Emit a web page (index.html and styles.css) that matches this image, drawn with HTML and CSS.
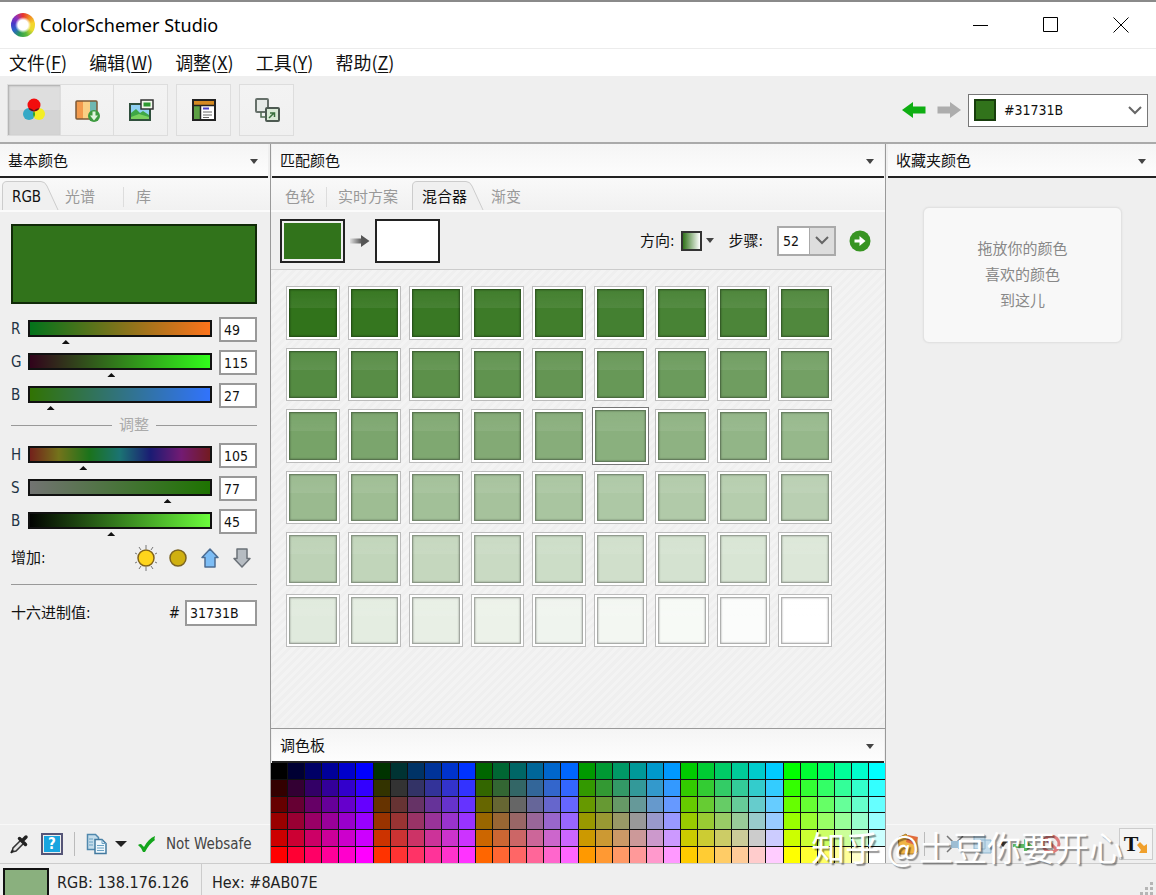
FILE: index.html
```html
<!DOCTYPE html>
<html lang="zh-CN">
<head>
    <meta charset="UTF-8">
    <title>ColorSchemer Studio</title>
    <link rel="stylesheet" href="styles.css">
</head>
<body>
    <header class="titlebar">
        <span class="logo"></span>
        <h1>ColorSchemer Studio</h1>
        <button class="win-btn" aria-label="最小化"><svg width="16" height="16"><path d="M0 8.500h15"/></svg></button>
        <button class="win-btn" aria-label="最大化"><svg width="16" height="16"><path d="M.5 .5h14v14h-14z"/></svg></button>
        <button class="win-btn" aria-label="关闭"><svg width="16" height="16"><path d="M.5 .5l15 15M15.500 .5l-15 15"/></svg></button>
    </header>
    <nav class="menubar">
        <a href="#">文件(<u>F</u>)</a>
        <a href="#">编辑(<u>W</u>)</a>
        <a href="#">调整(<u>X</u>)</a>
        <a href="#">工具(<u>Y</u>)</a>
        <a href="#">帮助(<u>Z</u>)</a>
    </nav>
    <div class="toolbar">
        <div class="group">
            <button class="selected" aria-label="基本颜色">
                <svg width="26" height="26" viewBox="0 0 26 26">
                    <circle cx="8" cy="17" r="6" fill="#35a9c6"/>
                    <circle cx="18" cy="17" r="6" fill="#f3ee25"/>
                    <path d="M13 13.700a6 6 0 0 1 0 6.600a6 6 0 0 1 0-6.600z" fill="#2fa52f"/>
                    <circle cx="13" cy="8" r="6.500" fill="#f30d0d"/>
                    <path d="M7.500 11.200a6 6 0 0 1 5.500 2.600a6 6 0 0 1 5.500-2.600a6.500 6.500 0 0 1-11 0z" fill="#5a1420"/>
                </svg>
            </button>
            <button aria-label="图库">
                <svg width="26" height="26" viewBox="0 0 26 26">
                    <path d="M2 4h7v18H2z" fill="#f39b4d"/>
                    <path d="M9 4h7v18H9z" fill="#fad084"/>
                    <path d="M16 4h7v18h-7z" fill="#6fb7b2"/>
                    <rect x="2" y="4" width="21" height="18" rx="1" fill="none" stroke="#7c5a37" stroke-width="1.500"/>
                    <circle cx="20" cy="19" r="6" fill="#3c9a3f"/>
                    <path d="M18.500 14.500h3v4h2.500l-4 5-4-5h2.500z" fill="#dff3dc"/>
                </svg>
            </button>
            <button aria-label="图片方案">
                <svg width="26" height="26" viewBox="0 0 26 26">
                    <rect x="2" y="7" width="20" height="16" fill="#8fd0f2" stroke="#2f4f3c" stroke-width="2"/>
                    <path d="M3 16l5-4 4 4 3-2 6 4v4H3z" fill="#3fa747"/>
                    <path d="M3 20l8-3 10 3v2H3z" fill="#7ad05e"/>
                    <rect x="13" y="3" width="12" height="9" fill="#f4f8ee" stroke="#333" stroke-width="1.500"/>
                    <path d="M15.500 5.500h7v4h-7z" fill="#2e9a31"/>
                </svg>
            </button>
        </div>
        <div class="group">
            <button aria-label="网页预览">
                <svg width="26" height="26" viewBox="0 0 26 26">
                    <rect x="2" y="3" width="22" height="20" fill="#fff" stroke="#222" stroke-width="2"/>
                    <path d="M3 4h20v4H3z" fill="#d58a22"/>
                    <path d="M3 9h7v13H3z" fill="#5da044"/>
                    <path d="M3 8.500h20M9.500 9v13" stroke="#222" stroke-width="1.500"/>
                    <path d="M12 11.500h6" stroke="#4b3ec4" stroke-width="2"/>
                    <path d="M12 15h9M12 18h9M12 20.500h6" stroke="#666"/>
                </svg>
            </button>
        </div>
        <div class="group">
            <button aria-label="浮动窗口">
                <svg width="26" height="26" viewBox="0 0 26 26">
                    <rect x="2" y="2" width="12" height="13" rx="1" fill="#e6eae7" stroke="#66706a" stroke-width="2"/>
                    <rect x="12" y="11" width="13" height="13" rx="1" fill="#d9ead6" stroke="#4d5a52" stroke-width="2"/>
                    <path d="M7 15v5h5" fill="none" stroke="#4d6b50" stroke-width="1.500"/>
                    <path d="M15 21l5-5M16 16h4.500v4" fill="none" stroke="#38703c" stroke-width="1.500"/>
                </svg>
            </button>
        </div>
        <div class="history">
            <button aria-label="后退"><svg width="24" height="18" viewBox="0 0 24 18"><path d="M0 9l11-8v4.500h12.500v7H11V17z" fill="#0eae12"/></svg></button>
            <button aria-label="前进"><svg width="24" height="18" viewBox="0 0 24 18"><path d="M24 9L13 1v4.500H.5v7H13V17z" fill="#adadad"/></svg></button>
            <div class="combo">
                <span class="chip"></span>
                <select aria-label="当前颜色"><option>#31731B</option></select>
                <svg class="chevron" width="14" height="9"><path d="M1 1l6 6 6-6"/></svg>
            </div>
        </div>
    </div>

    <main class="panels">
        <section class="panel basic">
            <h2>基本颜色<i class="caret"></i></h2>
            <div class="tabs">
                <button class="tab active tab-rgb"><svg width="57" height="29"><path d="M.5 29V5q0-4.500 4.500-4.500h34q4 0 6 4.500l11 24"/></svg><span>RGB</span></button>
                <button class="tab tab-spectrum">光谱</button>
                <button class="tab tab-library">库</button>
            </div>
            <div class="basic-body">
                <div class="current"></div>
                <div class="channels">
                    <div class="channel"><label for="r">R</label><input class="slide-r" type="range" max="255" value="49" aria-label="R"><input id="r" type="text" value="49"></div>
                    <div class="channel"><label for="g">G</label><input class="slide-g" type="range" max="255" value="115" aria-label="G"><input id="g" type="text" value="115"></div>
                    <div class="channel"><label for="b">B</label><input class="slide-b" type="range" max="255" value="27" aria-label="B"><input id="b" type="text" value="27"></div>
                </div>
                <div class="divider"><span>调整</span></div>
                <div class="channels">
                    <div class="channel"><label for="h">H</label><input class="slide-h" type="range" max="360" value="105" aria-label="H"><input id="h" type="text" value="105"></div>
                    <div class="channel"><label for="s">S</label><input class="slide-s" type="range" max="100" value="77" aria-label="S"><input id="s" type="text" value="77"></div>
                    <div class="channel"><label for="v">B</label><input class="slide-v" type="range" max="100" value="45" aria-label="B"><input id="v" type="text" value="45"></div>
                </div>
                <div class="increase">
                    <span>增加:</span>
                    <button aria-label="变亮">
                        <svg width="24" height="26" viewBox="0 0 24 26">
                            <path d="M12 0v4M12 22v4M5 2l2 3M19 2l-2 3M5 24l2-3M19 24l-2-3M1 8l2 1M23 8l-2 1M1 18l2-1M23 18l-2-1" stroke="#777"/>
                            <circle cx="12" cy="13" r="8" fill="#ffd51c" stroke="#80621a" stroke-width="1.500"/>
                        </svg>
                    </button>
                    <button aria-label="变暗"><svg width="24" height="26" viewBox="0 0 24 26"><circle cx="12" cy="13" r="8" fill="#d0b010" stroke="#7c6420" stroke-width="1.500"/></svg></button>
                    <button aria-label="增加饱和度"><svg width="24" height="26" viewBox="0 0 24 26"><path d="M12 4l8 8.500h-3V22H7v-9.500H4z" fill="#7dbdf5" stroke="#4c6c92" stroke-width="1.500" stroke-linejoin="round"/></svg></button>
                    <button aria-label="降低饱和度"><svg width="24" height="26" viewBox="0 0 24 26"><path d="M12 22l8-8.500h-3V4H7v9.500H4z" fill="#b6bcc2" stroke="#6b7178" stroke-width="1.500" stroke-linejoin="round"/></svg></button>
                </div>
                <div class="hex">
                    <label for="hex">十六进制值:</label>
                    <span>#</span>
                    <input id="hex" type="text" value="31731B">
                </div>
            </div>
            <div class="footer basic-footer">
                <button aria-label="取色器">
                    <svg width="20" height="20" viewBox="0 0 20 20">
                        <path d="M2 18l1-4 8-8 3 3-8 8z" fill="#e4e4e4" stroke="#333" stroke-width="1.500"/>
                        <path d="M9.500 4.500l6 6M12 7l4-4" stroke="#222" stroke-width="3.500" stroke-linecap="round"/>
                        <path d="M1 19l2-3" stroke="#222" stroke-width="2"/>
                    </svg>
                </button>
                <button class="help" aria-label="帮助">?</button>
                <span class="sep"></span>
                <button class="copy" aria-label="复制">
                    <svg width="22" height="22" viewBox="0 0 22 22">
                        <path d="M1.500 1.500h8l3 3v12h-11z" fill="#c4ddeb" stroke="#5088ad" stroke-width="1.500"/>
                        <path d="M9 6.500h7l4 4v10H9z" fill="#eef7fc" stroke="#42799f" stroke-width="1.500"/>
                        <path d="M16 6.500v4h4M11 12.500h7M11 15h7M11 17.500h7M3 6h4M3 9h4M3 12h4" fill="none" stroke="#6aa2c4"/>
                    </svg>
                    <i class="caret big"></i>
                </button>
                <svg width="20" height="18" viewBox="0 0 20 18"><path d="M1 10q3-2 4 0l2 2Q11 4 18 1q-1 3 0 4-6 4-10 12H6Q4 12 1 10z" fill="#13a51c"/></svg>
                <span class="websafe">Not Websafe</span>
            </div>
        </section>

        <section class="panel match">
            <h2>匹配颜色<i class="caret"></i></h2>
            <div class="tabs">
                <button class="tab tab-wheel">色轮</button>
                <button class="tab tab-live">实时方案</button>
                <button class="tab active tab-mixer"><svg width="72" height="29"><path d="M.5 29V5q0-4.500 4.500-4.500h49q4 0 6 4.500l11 24"/></svg><span>混合器</span></button>
                <button class="tab tab-gradient">渐变</button>
            </div>
            <div class="mixbar">
                <button class="mix from" aria-label="起始颜色"></button>
                <svg width="20" height="14" viewBox="0 0 20 14">
                    <defs><linearGradient id="fade"><stop offset="0" stop-color="#555" stop-opacity=".1"/><stop offset=".6" stop-color="#555"/></linearGradient></defs>
                    <path d="M0 4.500h11V1l8.500 6-8.500 6V9.500H0z" fill="url(#fade)"/>
                </svg>
                <button class="mix to" aria-label="结束颜色"></button>
                <span class="direction-label">方向:</span>
                <button class="direction" aria-label="方向"><span></span><i class="caret"></i></button>
                <label for="steps">步骤:</label>
                <div class="steps">
                    <select id="steps"><option>52</option></select>
                    <span><svg class="chevron" width="14" height="9"><path d="M1 1l6 6 6-6"/></svg></span>
                </div>
                <button class="go" aria-label="生成"><svg width="22" height="22" viewBox="0 0 22 22"><circle cx="11" cy="11" r="10.500" fill="#379422"/><path d="M5.500 9.500h5V6l6 5-6 5v-3.500h-5z" fill="#fff"/></svg></button>
            </div>
            <div class="swatch-area"><div class="swatches" id="swatches"></div></div>
            <h2 class="palette-title">调色板<i class="caret"></i></h2>
            <div class="palette" id="palette"></div>
        </section>

        <section class="panel favorites">
            <h2>收藏夹颜色<i class="caret"></i></h2>
            <p class="drop">拖放你的颜色<br>喜欢的颜色<br>到这儿</p>
            <div class="footer fav-footer">
                <button aria-label="打开"><svg width="24" height="24" viewBox="0 0 24 24"><path d="M2 6l8-4 3 4h8v14l-4 2H4z" fill="#f0b544" stroke="#a9782c"/><path d="M12 3l10 2-3 8-9-3z" fill="#e16b3c"/></svg></button>
                <span class="sep"></span>
                <button class="arrange" aria-label="排列"><svg width="24" height="24" viewBox="0 0 24 24"><path d="M4 4l6 6M20 4l-6 6M4 20l6-6M20 20l-6-6" stroke="#777" stroke-width="1.500"/><path d="M8 9h8v7H8z" fill="#9dbdd3"/></svg></button>
                <button aria-label="复制颜色"><svg width="24" height="24" viewBox="0 0 24 24"><path d="M3 3h11v14H3zM9 8h11v13H9z" fill="#c5ddec" stroke="#8fb6cf"/></svg></button>
                <button aria-label="菜单"><i class="caret"></i></button>
                <button aria-label="添加"><svg width="24" height="24" viewBox="0 0 24 24"><path d="M2 12h11V7l9 7-9 7v-5H2z" fill="#5cb862"/></svg></button>
                <button aria-label="删除"><svg width="24" height="24" viewBox="0 0 24 24"><circle cx="12" cy="12" r="8" fill="none" stroke="#dd7c7c" stroke-width="3"/><path d="M7 7l10 10" stroke="#dd7c7c" stroke-width="3"/></svg></button>
                <button class="text-btn" aria-label="文字"><b>T</b><svg width="12" height="12" viewBox="0 0 12 12"><path d="M1 3l3-3 4 4 3-2v9H3l2-3z" fill="#f0a02c"/></svg></button>
            </div>
        </section>
    </main>

    <footer class="statusbar">
        <span class="status-chip"></span>
        <span class="status-rgb">RGB: 138.176.126</span>
        <span class="status-hex">Hex: #8AB07E</span>
        <svg class="grip" width="14" height="14"><path d="M10 1h3v3h-3zM5 6h3v3H5zM10 6h3v3h-3zM0 11h3v3H0zM5 11h3v3H5zM10 11h3v3h-3z"/></svg>
    </footer>
    <div class="watermark">知乎 @土豆你要开心</div>

    <script>
        var oSwatches = document.getElementById('swatches');
        var oPalette = document.getElementById('palette');
        var from = [49, 115, 27];
        var to = [255, 255, 255];
        var steps = 52;
        var last = steps + 1;

        // both end colours plus the steps between them
        for(var i=0; i<=last; i++){
            var rgb = [];
            for(var j=0; j<3; j++){
                rgb.push(Math.round(from[j] + (to[j] - from[j]) * i / last));
            }
            var oBtn = document.createElement('button');
            oBtn.className = i == 23 ? 'swatch selected' : 'swatch';
            oBtn.setAttribute('aria-label', 'rgb ' + rgb.join('.'));
            var oColor = document.createElement('span');
            oColor.style.backgroundColor = 'rgb(' + rgb.join(',') + ')';
            oBtn.appendChild(oColor);
            oSwatches.appendChild(oBtn);
        }

        // websafe colours: red by row, green by block, blue inside a block
        for(var r=0; r<6; r++){
            for(var c=0; c<36; c++){
                var oCell = document.createElement('span');
                oCell.style.backgroundColor = 'rgb(' + [r * 51, Math.floor(c / 6) * 51, c % 6 * 51].join(',') + ')';
                oPalette.appendChild(oCell);
            }
        }
    </script>
</body>
</html>
```
FILE: styles.css
```css
*{
    margin: 0;
    padding: 0;
    box-sizing: border-box;
}
body{
    display: flex;
    flex-direction: column;
    height: 100vh;
    overflow: hidden;
    background: #efefef;
    color: #111;
    font: 15px/20px "DejaVu Sans Condensed", "Noto Sans CJK SC", sans-serif;
}
button, input, select{
    font: inherit;
    color: inherit;
    border: 0;
    background: none;
    border-radius: 0;
}
button{
    display: flex;
    align-items: center;
    flex: none;
}
svg{
    flex: none;
    display: block;
}
select{
    appearance: none;
    outline: 0;
}
a{
    color: inherit;
    text-decoration: none;
}

/* title and menu */
.titlebar{
    display: flex;
    align-items: center;
    flex: none;
    height: 49px;
    padding-left: 11px;
    border-top: 2px solid #8a8a8a;
    border-bottom: 1px solid #ececec;
    background: #fff;
}
.titlebar h1{
    flex: 1;
    padding-left: 5px;
    font: 18px/24px "Noto Sans", sans-serif;
    color: #000;
}
.logo{
    width: 24px;
    height: 24px;
    border-radius: 50%;
    background: radial-gradient(#fff 0 5px, transparent 8px), conic-gradient(#e8342c, #f08a24, #f6d52c, #e8dc30, #5cb83c, #2a9c54, #2b62c8, #4a36c8, #9430b8, #e8342c);
}
.win-btn{
    justify-content: center;
    width: 70px;
    height: 46px;
}
.win-btn path{
    fill: none;
    stroke: #000;
}
.menubar{
    display: flex;
    flex: none;
    gap: 22px;
    height: 27px;
    padding-left: 9px;
    background: #fff;
    font: 18px/27px "Noto Sans CJK SC", sans-serif;
}
.menubar u{
    text-underline-offset: 2px;
}

/* toolbar */
.toolbar{
    display: flex;
    align-items: center;
    flex: none;
    gap: 8px;
    height: 68px;
    padding: 2px 8px 0 7px;
    border-bottom: 2px solid #aaa;
}
.group{
    display: flex;
    border: 1px solid #ddd;
    background: linear-gradient(#f3f3f3, #f0f0f0);
}
.group button{
    justify-content: center;
    width: 53px;
    height: 50px;
    border-right: 1px solid #ddd;
}
.group button:last-child{
    border-right: 0;
}
.group .selected{
    background: linear-gradient(#dedede 50%, #d4d4d4 50%);
    box-shadow: inset 1px 1px 2px #aaa;
}
.history{
    display: flex;
    align-items: center;
    gap: 11px;
    margin-left: auto;
}
.combo{
    display: flex;
    align-items: center;
    width: 180px;
    height: 33px;
    margin-left: -4px;
    padding: 0 5px;
    border: 1px solid #777;
    background: #fff;
}
.combo select{
    flex: 1;
    padding-left: 8px;
    font-size: 14px;
}
.chip{
    width: 22px;
    height: 22px;
    border: 2px solid #173d0c;
    background: #31731b;
}
.chevron path{
    fill: none;
    stroke: #666;
    stroke-width: 2;
}

/* panels */
.panels{
    display: grid;
    grid-template-columns: 270px minmax(0, 1fr) 270px;
    flex: 1;
    min-height: 0;
}
.panel{
    display: flex;
    flex-direction: column;
    min-height: 0;
}
.match{
    border-left: 1px solid #999;
    border-right: 1px solid #999;
}
.panel h2{
    display: flex;
    align-items: center;
    justify-content: space-between;
    flex: none;
    height: 34px;
    margin-right: 2px;
    padding: 2px 10px 0 8px;
    border-bottom: 2px solid #222;
    background: linear-gradient(#f5f5f5, #fdfdfd);
    font-size: 15px;
    font-weight: 400;
}
.match h2{
    margin: 0 1px;
}
.favorites h2{
    margin: 0 0 0 2px;
}
.caret{
    flex: none;
    border: 4px solid transparent;
    border-top: 5px solid #444;
    border-bottom: 0;
}
.tabs{
    display: flex;
    align-items: flex-end;
    flex: none;
    height: 34px;
    border-bottom: 2px solid #fbfbfb;
    background: linear-gradient(#f9f9f9, #f1f1f1);
}
.tab{
    height: 20px;
    margin-bottom: 3px;
    color: #999;
    white-space: nowrap;
}
.tab.active{
    display: grid;
    height: 29px;
    margin: 0;
    color: #111;
    text-align: left;
}
.tab.active svg, .tab.active span{
    grid-area: 1 / 1;
}
.tab.active span{
    padding: 2px 0 0 10px;
}
.tab path{
    fill: #f0f0f0;
    stroke: #ccc;
}
.tabs .tab-rgb{
    margin-left: 2px;
}
.tab-spectrum{
    padding: 0 28px 0 6px;
    border-right: 1px solid #ddd;
}
.tab-library{
    padding-left: 12px;
}
.tab-wheel{
    padding: 0 11px 0 14px;
    border-right: 1px solid #ddd;
}
.tab-live{
    padding: 0 14px 0 11px;
}
.tab-gradient{
    padding-left: 7px;
}

/* basic color */
.basic-body{
    flex: 1;
    padding: 12px 13px 0 11px;
}
.current{
    height: 80px;
    border: 2px solid #102a08;
    background: #31731b;
}
.channels{
    display: grid;
    gap: 8px;
    margin-top: 13px;
}
.channel{
    display: flex;
    height: 25px;
}
.channel label{
    width: 17px;
    line-height: 25px;
    color: #234;
}
input[type=text]{
    min-width: 0;
    border: 2px solid #999;
    background: #fff;
    font-size: 14px;
}
.channel input[type=text]{
    width: 38px;
    padding-left: 3px;
}
input[type=range]{
    flex: 1;
    min-width: 0;
    height: 25px;
    margin-right: 7px;
    appearance: none;
}
input[type=range]::-webkit-slider-runnable-track{
    height: 25px;
    margin-top: 6px;
    border: 0;
    background: linear-gradient(#111, #111) 0 0 / 100% 2px no-repeat, linear-gradient(#111, #111) 0 15px / 100% 2px no-repeat, linear-gradient(#111, #111) 0 0 / 2px 17px no-repeat, linear-gradient(#111, #111) 100% 0 / 2px 17px no-repeat, var(--track) 0 0 / 100% 17px no-repeat;
}
input[type=range]::-webkit-slider-thumb{
    appearance: none;
    width: 8px;
    height: 4px;
    margin-top: 20px;
    background: #111;
    clip-path: polygon(50% 0, 100% 100%, 0 100%);
}
.slide-r{
    --track: linear-gradient(90deg, #00731b, #ff731b);
}
.slide-g{
    --track: linear-gradient(90deg, #31001b, #31ff1b);
}
.slide-b{
    --track: linear-gradient(90deg, #317300, #3173ff);
}
.slide-h{
    --track: linear-gradient(90deg, #731b1b, #73731b, #1b731b, #1b7373, #1b1b73, #731b73, #731b1b);
}
.slide-s{
    --track: linear-gradient(90deg, #737373, #1d7300);
}
.slide-v{
    --track: linear-gradient(90deg, #000, #6cff3c);
}
.divider{
    display: flex;
    align-items: center;
    gap: 7px;
    height: 20px;
    margin-top: 7px;
    color: #aaa;
}
.divider:before, .divider:after{
    content: "";
    flex: 1;
    border-top: 1px solid #999;
}
.divider + .channels{
    margin-top: 8px;
}
.increase{
    display: flex;
    align-items: center;
    gap: 8px;
    height: 51px;
    padding: 0 3px 3px 0;
    border-bottom: 1px solid #999;
}
.increase span{
    flex: 1;
}
.hex{
    display: flex;
    align-items: center;
    margin-top: 15px;
}
.hex label{
    flex: 1;
}
.hex span{
    padding-right: 5px;
}
.hex input{
    width: 72px;
    height: 26px;
    padding-left: 3px;
}
.footer{
    display: flex;
    align-items: center;
    flex: none;
    height: 39px;
    border-top: 1px solid #f8f8f8;
}
.basic-footer{
    padding-left: 10px;
    font-size: 15px;
    color: #444;
}
.help{
    justify-content: center;
    width: 22px;
    height: 22px;
    margin: 0 11px;
    border: 2px solid #557;
    outline: 1px solid #eee;
    outline-offset: -3px;
    background: #18a5e0;
    color: #fff;
    font-weight: 700;
}
.sep{
    width: 1px;
    height: 24px;
    background: #bbb;
}
.copy{
    gap: 7px;
    margin: 0 10px 0 11px;
}
.caret.big{
    border-width: 6px 6px 0;
    border-top-color: #222;
}
.websafe{
    padding-left: 9px;
}

/* mixer */
.mixbar{
    display: flex;
    align-items: center;
    flex: none;
    height: 58px;
    padding: 0 14px 0 9px;
    border-bottom: 1px solid #ccc;
}
.mix{
    width: 65px;
    height: 44px;
    border: 2px solid #222;
}
.mix + svg{
    margin: 0 5px;
}
.from{
    background: #31731b;
    box-shadow: inset 0 0 0 2px #f0f0f0;
}
.to{
    background: #fff;
}
.direction-label{
    margin-left: auto;
}
.direction{
    gap: 4px;
    margin: 0 14px 0 7px;
}
.direction span{
    width: 21px;
    height: 20px;
    border: 2px solid #333;
    background: linear-gradient(90deg, #31731b, #fff);
}
.steps{
    display: flex;
    width: 59px;
    height: 30px;
    margin: 0 13px 0 14px;
    border: 2px solid #aaa;
    background: #fff;
}
.steps select{
    flex: 1;
    min-width: 0;
    padding-left: 4px;
    font-size: 14px;
}
.steps span{
    display: flex;
    align-items: center;
    justify-content: center;
    width: 25px;
    border-left: 1px solid #aaa;
    background: #ddd;
}
.swatch-area{
    flex: 1;
    min-height: 0;
    padding: 16px 15px;
    border-bottom: 1px solid #999;
    background: repeating-linear-gradient(135deg, #f3f3f3 0 3px, #efefef 3px 6px);
}
.swatches{
    display: grid;
    grid-template-columns: repeat(9, minmax(0, 1fr));
    gap: 8px;
    max-width: 546px;
}
.swatch{
    aspect-ratio: 1;
    padding: 2px;
    border: 1px solid #bbb;
    background: #fff;
}
.swatch span{
    width: 100%;
    height: 100%;
    border: 1px solid rgba(0, 0, 0, .3);
    background-image: linear-gradient(rgba(255, 255, 255, .02), rgba(255, 255, 255, .07) 40%, transparent 40%);
    box-shadow: inset 0 0 2px rgba(0, 0, 0, .4);
}
.swatch.selected{
    margin: -2px;
    border-color: #777;
}
.palette{
    display: grid;
    grid-template-columns: repeat(36, 1fr);
    grid-template-rows: repeat(6, 1fr);
    flex: none;
    gap: 1px;
    height: 100px;
    background: #111;
}

/* favorites */
.drop{
    margin: 29px 34px auto 37px;
    padding: 28px 0;
    border: 1px solid #e2e2e2;
    border-radius: 6px;
    background: #f8f8f8;
    box-shadow: 0 0 2px #ddd;
    line-height: 26px;
    text-align: center;
    color: #888;
}
.fav-footer{
    gap: 4px;
    padding: 0 3px 0 10px;
}
.arrange{
    margin-left: 14px;
}
.text-btn{
    justify-content: center;
    width: 34px;
    height: 32px;
    margin-left: auto;
    border: 1px solid #ccc;
    background: #f4f4f4;
    font: 22px/24px "Liberation Serif", serif;
}
.text-btn svg{
    margin: 8px 0 0 -2px;
}

/* status */
.statusbar{
    display: flex;
    flex: none;
    height: 32px;
    padding-left: 3px;
    border-top: 1px solid #ccc;
    font-size: 16px;
    line-height: 38px;
    color: #222;
}
.status-chip{
    width: 46px;
    margin: 4px 8px 0 0;
    border: 2px solid #111;
    border-bottom: 0;
    background: #8ab07e;
}
.status-hex{
    margin-left: 12px;
    padding-left: 10px;
    border-left: 1px solid #ccc;
}
.grip{
    align-self: flex-end;
    margin: 0 2px 0 auto;
    fill: #b5b5b5;
}
.watermark{
    position: absolute;
    right: 33px;
    bottom: 24px;
    font: 34px/48px "Noto Sans CJK SC", sans-serif;
    color: #fff;
    text-shadow: 2px 2px 1px rgba(0, 0, 0, .4);
    pointer-events: none;
}
```
